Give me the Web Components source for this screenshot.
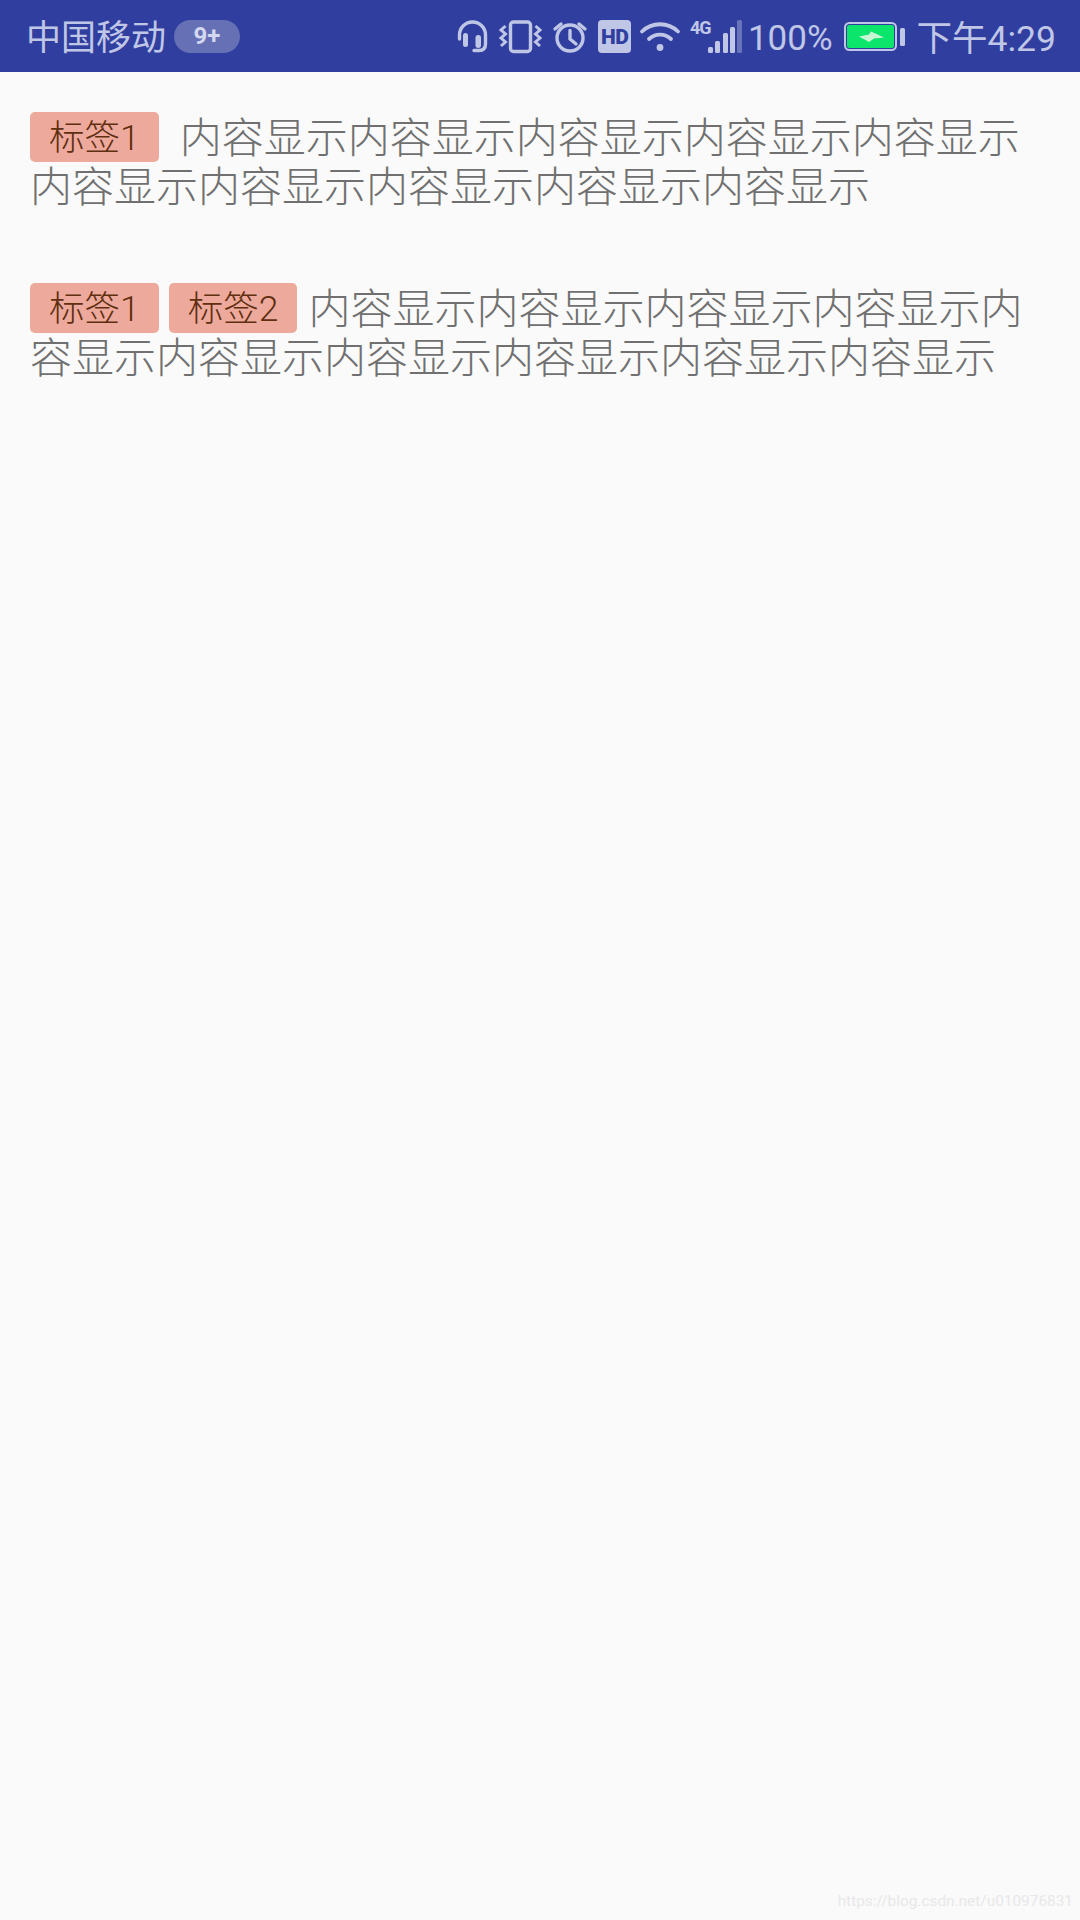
<!DOCTYPE html>
<html lang="zh-CN">
<head>
<meta charset="utf-8">
<title>标签</title>
<style>
  html, body { margin: 0; height: 100%; }
  body {
    background: #fafafa;
    font-family: Roboto, "Noto Sans CJK SC", sans-serif;
  }
  .page { display: flex; flex-direction: column; height: 1920px; position: relative; }
  .rows { display: flex; flex-direction: column; gap: 73px; padding: 42px 30px 0; }
</style>
</head>
<body>
<div class="page">
  <status-bar></status-bar>
  <div class="rows">
    <tagged-text lead="21"><tag-label>标签1</tag-label>内容显示内容显示内容显示内容显示内容显示<br>内容显示内容显示内容显示内容显示内容显示</tagged-text>
    <tagged-text lead="11"><tag-label>标签1</tag-label><tag-label>标签2</tag-label>内容显示内容显示内容显示内容显示内<br>容显示内容显示内容显示内容显示内容显示内容显示</tagged-text>
  </div>
  <water-mark>https://blog.csdn.net/u010976831</water-mark>
</div>

<script>
class StatusBar extends HTMLElement {
  constructor() {
    super();
    this.attachShadow({ mode: "open" });
  }

  connectedCallback() {
    this.shadowRoot.innerHTML = `
      <style>
        :host {
          display: flex;
          align-items: center;
          justify-content: space-between;
          height: 72px;
          padding: 0 24px 0 26px;
          box-sizing: border-box;
          background: #303f9f;
          color: #c0c6e6;
          font-size: 35px;
        }
        .left, .right { display: flex; align-items: center; }
        svg { display: block; flex: none; overflow: visible; }
        .txt { line-height: 64px; padding-top: 6px; }
        .badge {
          display: flex;
          align-items: center;
          justify-content: center;
          width: 66px;
          height: 33px;
          margin-left: 8px;
          border-radius: 17px;
          background: #6670b5;
          color: #d3d7ef;
          font-size: 24px;
          font-weight: 700;
        }
        .pct { margin: 0 11px 0 4px; }
        .time { margin-left: 12px; font-size: 35.500px; }
      </style>
      <div class="left">
        <span class="txt">中国移动</span>
        <span class="badge">9+</span>
      </div>
      <div class="right">
        <svg width="31" height="33" viewBox="0 0 31 33" style="margin-right:11px" fill="none" stroke="currentColor" stroke-width="3.4" stroke-linecap="round">
          <path d="M2.5 19V15a13 13 0 0 1 26 0v9q0 6.500-6.500 6.500H17"/>
          <rect x="6" y="13" width="5" height="14" rx="2.500" fill="currentColor" stroke="none"/>
          <rect x="18.500" y="15" width="5.500" height="13" rx="2.700" fill="currentColor" stroke="none"/>
        </svg>
        <svg width="43" height="33" viewBox="0 0 43 33" style="margin-right:11px" fill="none" stroke="currentColor">
          <rect x="11.500" y="2" width="20" height="29.500" rx="3" stroke-width="3.400"/>
          <path d="M6.500 6L2 10l4.500 4L2 18l4.500 4L2 26M36.500 6l4.500 4-4.500 4 4.500 4-4.500 4 4.500 4" stroke-width="3"/>
        </svg>
        <svg width="33" height="33" viewBox="0 0 33 33" style="margin-right:12px" fill="none" stroke="currentColor" stroke-width="3.400" stroke-linecap="round" stroke-linejoin="round">
          <circle cx="17" cy="18" r="13"/>
          <path d="M17 10.500V19l6 5M2 9l6-5M32 9l-6-5"/>
        </svg>
        <svg width="33" height="33" viewBox="0 0 33 33" style="margin-right:9px">
          <rect width="33" height="33" rx="4" fill="currentColor"/>
          <text x="3" y="24" font-size="21" font-weight="900" letter-spacing="-.5" fill="#303f9f">HD</text>
        </svg>
        <svg width="40" height="33" viewBox="0 0 40 33" style="margin-right:10px" fill="none" stroke="currentColor" stroke-width="3.800" stroke-linecap="round">
          <path d="M2 11.500a26 26 0 0 1 36 0M9 19a16 16 0 0 1 22 0"/>
          <circle cx="20" cy="27.500" r="3.400" fill="currentColor" stroke="none"/>
        </svg>
        <svg width="54" height="33" viewBox="0 0 54 33" fill="currentColor">
          <text x="0" y="14" font-size="18" font-weight="700" letter-spacing="-1.200">4G</text>
          <rect x="18" y="27" width="5" height="6" rx="1.500"/>
          <rect x="25" y="21" width="5" height="12" rx="1.500"/>
          <rect x="33" y="13" width="5" height="20" rx="1.500"/>
          <rect x="40" y="7" width="5" height="26" rx="1.500"/>
          <rect x="47" y="0" width="5" height="33" rx="1.500" opacity=".4"/>
        </svg>
        <span class="txt pct">100%</span>
        <svg width="61" height="29" viewBox="0 0 61 29">
          <rect x="1" y="1" width="51" height="27" rx="4.500" fill="none" stroke="currentColor" stroke-width="2"/>
          <rect x="3" y="3" width="47" height="23" rx="2.500" fill="#0be56b"/>
          <polygon points="15,14.500 25,12.500 27,9.500 40,15.500 30,16.500 25,20" fill="#c8f7d5"/>
          <rect x="56" y="6" width="5" height="18" rx="1.500" fill="currentColor"/>
        </svg>
        <span class="txt time">下午4:29</span>
      </div>
    `;
  }
}

class TagLabel extends HTMLElement {
  constructor() {
    super();
    this.attachShadow({ mode: "open" });
    this.shadowRoot.innerHTML = `
      <style>
        :host {
          display: inline-block;
          vertical-align: top;
          height: 50px;
          line-height: 53px;
          padding: 0 19px;
          margin: -2px 10px 0 0;
          border-radius: 5px;
          background: #eea99d;
          color: #5f2f10;
          font-size: 35.500px;
          font-weight: 300;
        }
      </style>
      <slot></slot>
    `;
  }
}

class TaggedText extends HTMLElement {
  constructor() {
    super();
    this.attachShadow({ mode: "open" });
    this.shadowRoot.innerHTML = `
      <style>
        :host {
          display: block;
          color: #707070;
          font-size: 42px;
          line-height: 49px;
          font-weight: 300;
        }
        slot { display: inline; }
      </style>
      <slot></slot>
    `;
  }

  connectedCallback() {
    // gap between the last tag and the text differs per row
    const lead = this.getAttribute("lead");
    const tags = this.querySelectorAll("tag-label");
    if (lead && tags.length) {
      tags[tags.length - 1].style.marginRight = lead + "px";
    }
  }
}

class WaterMark extends HTMLElement {
  constructor() {
    super();
    this.attachShadow({ mode: "open" });
    this.shadowRoot.innerHTML = `
      <style>
        :host {
          position: absolute;
          right: 7px;
          bottom: 9px;
          color: #e8e8e8;
          font-size: 15.400px;
          line-height: 20px;
        }
      </style>
      <slot></slot>
    `;
  }
}

customElements.define("status-bar", StatusBar);
customElements.define("tag-label", TagLabel);
customElements.define("tagged-text", TaggedText);
customElements.define("water-mark", WaterMark);
</script>
</body>
</html>
